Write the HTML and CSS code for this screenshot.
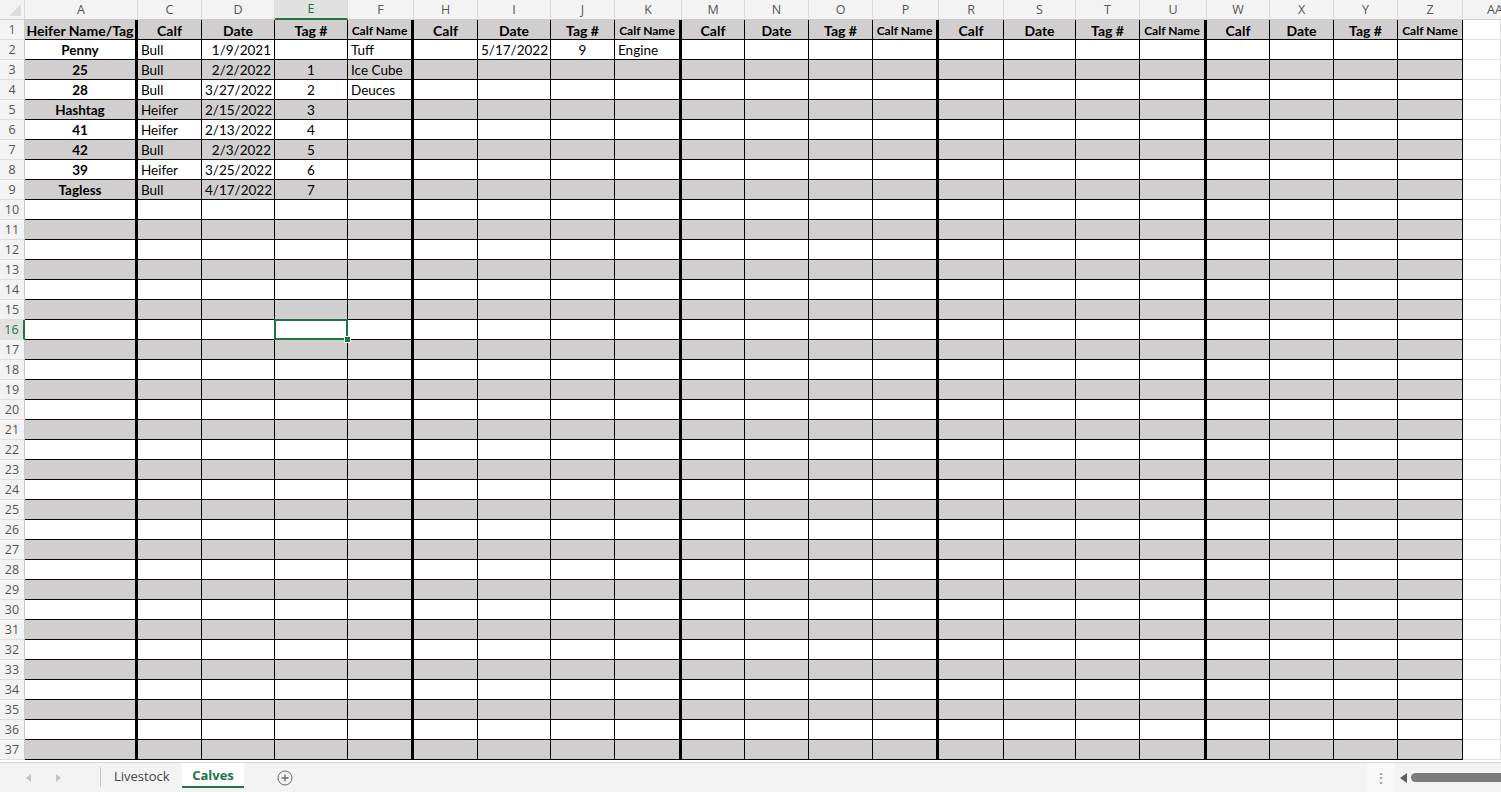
FILE: index.html
```html
<!DOCTYPE html>
<html>
<head>
<meta charset="utf-8">
<title>Calves</title>
<link rel="stylesheet" href="styles.css">
</head>
<body>
<div class="sheet">
  <div class="colhdr"><span class="corner"></span><span>A</span><span>C</span><span>D</span><span class="on">E</span><span>F</span><span>H</span><span>I</span><span>J</span><span>K</span><span>M</span><span>N</span><span>O</span><span>P</span><span>R</span><span>S</span><span>T</span><span>U</span><span>W</span><span>X</span><span>Y</span><span>Z</span><span class="aa">AA</span></div>
  <div class="row h g"><span class="rh">1</span><span>Heifer Name/Tag</span><span>Calf</span><span>Date</span><span>Tag #</span><span class="sm">Calf Name</span><span>Calf</span><span>Date</span><span>Tag #</span><span class="sm">Calf Name</span><span>Calf</span><span>Date</span><span>Tag #</span><span class="sm">Calf Name</span><span>Calf</span><span>Date</span><span>Tag #</span><span class="sm">Calf Name</span><span>Calf</span><span>Date</span><span>Tag #</span><span class="sm">Calf Name</span><span></span></div>
  <div class="row"><span class="rh">2</span><span>Penny</span><span>Bull</span><span>1/9/2021</span><span></span><span>Tuff</span><span></span><span>5/17/2022</span><span>9</span><span>Engine</span><span></span><span></span><span></span><span></span><span></span><span></span><span></span><span></span><span></span><span></span><span></span><span></span><span></span></div>
  <div class="row g"><span class="rh">3</span><span>25</span><span>Bull</span><span>2/2/2022</span><span>1</span><span>Ice Cube</span><span></span><span></span><span></span><span></span><span></span><span></span><span></span><span></span><span></span><span></span><span></span><span></span><span></span><span></span><span></span><span></span><span></span></div>
  <div class="row"><span class="rh">4</span><span>28</span><span>Bull</span><span>3/27/2022</span><span>2</span><span>Deuces</span><span></span><span></span><span></span><span></span><span></span><span></span><span></span><span></span><span></span><span></span><span></span><span></span><span></span><span></span><span></span><span></span><span></span></div>
  <div class="row g"><span class="rh">5</span><span>Hashtag</span><span>Heifer</span><span>2/15/2022</span><span>3</span><span></span><span></span><span></span><span></span><span></span><span></span><span></span><span></span><span></span><span></span><span></span><span></span><span></span><span></span><span></span><span></span><span></span><span></span></div>
  <div class="row"><span class="rh">6</span><span>41</span><span>Heifer</span><span>2/13/2022</span><span>4</span><span></span><span></span><span></span><span></span><span></span><span></span><span></span><span></span><span></span><span></span><span></span><span></span><span></span><span></span><span></span><span></span><span></span><span></span></div>
  <div class="row g"><span class="rh">7</span><span>42</span><span>Bull</span><span>2/3/2022</span><span>5</span><span></span><span></span><span></span><span></span><span></span><span></span><span></span><span></span><span></span><span></span><span></span><span></span><span></span><span></span><span></span><span></span><span></span><span></span></div>
  <div class="row"><span class="rh">8</span><span>39</span><span>Heifer</span><span>3/25/2022</span><span>6</span><span></span><span></span><span></span><span></span><span></span><span></span><span></span><span></span><span></span><span></span><span></span><span></span><span></span><span></span><span></span><span></span><span></span><span></span></div>
  <div class="row g"><span class="rh">9</span><span>Tagless</span><span>Bull</span><span>4/17/2022</span><span>7</span><span></span><span></span><span></span><span></span><span></span><span></span><span></span><span></span><span></span><span></span><span></span><span></span><span></span><span></span><span></span><span></span><span></span><span></span></div>
  <div class="row"><span class="rh">10</span><span></span><span></span><span></span><span></span><span></span><span></span><span></span><span></span><span></span><span></span><span></span><span></span><span></span><span></span><span></span><span></span><span></span><span></span><span></span><span></span><span></span><span></span></div>
  <div class="row g"><span class="rh">11</span><span></span><span></span><span></span><span></span><span></span><span></span><span></span><span></span><span></span><span></span><span></span><span></span><span></span><span></span><span></span><span></span><span></span><span></span><span></span><span></span><span></span><span></span></div>
  <div class="row"><span class="rh">12</span><span></span><span></span><span></span><span></span><span></span><span></span><span></span><span></span><span></span><span></span><span></span><span></span><span></span><span></span><span></span><span></span><span></span><span></span><span></span><span></span><span></span><span></span></div>
  <div class="row g"><span class="rh">13</span><span></span><span></span><span></span><span></span><span></span><span></span><span></span><span></span><span></span><span></span><span></span><span></span><span></span><span></span><span></span><span></span><span></span><span></span><span></span><span></span><span></span><span></span></div>
  <div class="row"><span class="rh">14</span><span></span><span></span><span></span><span></span><span></span><span></span><span></span><span></span><span></span><span></span><span></span><span></span><span></span><span></span><span></span><span></span><span></span><span></span><span></span><span></span><span></span><span></span></div>
  <div class="row g"><span class="rh">15</span><span></span><span></span><span></span><span></span><span></span><span></span><span></span><span></span><span></span><span></span><span></span><span></span><span></span><span></span><span></span><span></span><span></span><span></span><span></span><span></span><span></span><span></span></div>
  <div class="row"><span class="rh on">16</span><span></span><span></span><span></span><span class="sel"></span><span></span><span></span><span></span><span></span><span></span><span></span><span></span><span></span><span></span><span></span><span></span><span></span><span></span><span></span><span></span><span></span><span></span><span></span></div>
  <div class="row g"><span class="rh">17</span><span></span><span></span><span></span><span></span><span></span><span></span><span></span><span></span><span></span><span></span><span></span><span></span><span></span><span></span><span></span><span></span><span></span><span></span><span></span><span></span><span></span><span></span></div>
  <div class="row"><span class="rh">18</span><span></span><span></span><span></span><span></span><span></span><span></span><span></span><span></span><span></span><span></span><span></span><span></span><span></span><span></span><span></span><span></span><span></span><span></span><span></span><span></span><span></span><span></span></div>
  <div class="row g"><span class="rh">19</span><span></span><span></span><span></span><span></span><span></span><span></span><span></span><span></span><span></span><span></span><span></span><span></span><span></span><span></span><span></span><span></span><span></span><span></span><span></span><span></span><span></span><span></span></div>
  <div class="row"><span class="rh">20</span><span></span><span></span><span></span><span></span><span></span><span></span><span></span><span></span><span></span><span></span><span></span><span></span><span></span><span></span><span></span><span></span><span></span><span></span><span></span><span></span><span></span><span></span></div>
  <div class="row g"><span class="rh">21</span><span></span><span></span><span></span><span></span><span></span><span></span><span></span><span></span><span></span><span></span><span></span><span></span><span></span><span></span><span></span><span></span><span></span><span></span><span></span><span></span><span></span><span></span></div>
  <div class="row"><span class="rh">22</span><span></span><span></span><span></span><span></span><span></span><span></span><span></span><span></span><span></span><span></span><span></span><span></span><span></span><span></span><span></span><span></span><span></span><span></span><span></span><span></span><span></span><span></span></div>
  <div class="row g"><span class="rh">23</span><span></span><span></span><span></span><span></span><span></span><span></span><span></span><span></span><span></span><span></span><span></span><span></span><span></span><span></span><span></span><span></span><span></span><span></span><span></span><span></span><span></span><span></span></div>
  <div class="row"><span class="rh">24</span><span></span><span></span><span></span><span></span><span></span><span></span><span></span><span></span><span></span><span></span><span></span><span></span><span></span><span></span><span></span><span></span><span></span><span></span><span></span><span></span><span></span><span></span></div>
  <div class="row g"><span class="rh">25</span><span></span><span></span><span></span><span></span><span></span><span></span><span></span><span></span><span></span><span></span><span></span><span></span><span></span><span></span><span></span><span></span><span></span><span></span><span></span><span></span><span></span><span></span></div>
  <div class="row"><span class="rh">26</span><span></span><span></span><span></span><span></span><span></span><span></span><span></span><span></span><span></span><span></span><span></span><span></span><span></span><span></span><span></span><span></span><span></span><span></span><span></span><span></span><span></span><span></span></div>
  <div class="row g"><span class="rh">27</span><span></span><span></span><span></span><span></span><span></span><span></span><span></span><span></span><span></span><span></span><span></span><span></span><span></span><span></span><span></span><span></span><span></span><span></span><span></span><span></span><span></span><span></span></div>
  <div class="row"><span class="rh">28</span><span></span><span></span><span></span><span></span><span></span><span></span><span></span><span></span><span></span><span></span><span></span><span></span><span></span><span></span><span></span><span></span><span></span><span></span><span></span><span></span><span></span><span></span></div>
  <div class="row g"><span class="rh">29</span><span></span><span></span><span></span><span></span><span></span><span></span><span></span><span></span><span></span><span></span><span></span><span></span><span></span><span></span><span></span><span></span><span></span><span></span><span></span><span></span><span></span><span></span></div>
  <div class="row"><span class="rh">30</span><span></span><span></span><span></span><span></span><span></span><span></span><span></span><span></span><span></span><span></span><span></span><span></span><span></span><span></span><span></span><span></span><span></span><span></span><span></span><span></span><span></span><span></span></div>
  <div class="row g"><span class="rh">31</span><span></span><span></span><span></span><span></span><span></span><span></span><span></span><span></span><span></span><span></span><span></span><span></span><span></span><span></span><span></span><span></span><span></span><span></span><span></span><span></span><span></span><span></span></div>
  <div class="row"><span class="rh">32</span><span></span><span></span><span></span><span></span><span></span><span></span><span></span><span></span><span></span><span></span><span></span><span></span><span></span><span></span><span></span><span></span><span></span><span></span><span></span><span></span><span></span><span></span></div>
  <div class="row g"><span class="rh">33</span><span></span><span></span><span></span><span></span><span></span><span></span><span></span><span></span><span></span><span></span><span></span><span></span><span></span><span></span><span></span><span></span><span></span><span></span><span></span><span></span><span></span><span></span></div>
  <div class="row"><span class="rh">34</span><span></span><span></span><span></span><span></span><span></span><span></span><span></span><span></span><span></span><span></span><span></span><span></span><span></span><span></span><span></span><span></span><span></span><span></span><span></span><span></span><span></span><span></span></div>
  <div class="row g"><span class="rh">35</span><span></span><span></span><span></span><span></span><span></span><span></span><span></span><span></span><span></span><span></span><span></span><span></span><span></span><span></span><span></span><span></span><span></span><span></span><span></span><span></span><span></span><span></span></div>
  <div class="row"><span class="rh">36</span><span></span><span></span><span></span><span></span><span></span><span></span><span></span><span></span><span></span><span></span><span></span><span></span><span></span><span></span><span></span><span></span><span></span><span></span><span></span><span></span><span></span><span></span></div>
  <div class="row g"><span class="rh">37</span><span></span><span></span><span></span><span></span><span></span><span></span><span></span><span></span><span></span><span></span><span></span><span></span><span></span><span></span><span></span><span></span><span></span><span></span><span></span><span></span><span></span><span></span></div>
</div>
<div class="tabbar">
  <div class="nav">
    <svg class="arrow" width="6" height="8" viewBox="0 0 6 8"><path d="M5 0 L0 4 L5 8 Z" fill="#c4c4c4"/></svg>
    <svg class="arrow" width="6" height="8" viewBox="0 0 6 8"><path d="M1 0 L6 4 L1 8 Z" fill="#c4c4c4"/></svg>
  </div>
  <div class="tabs">
    <span class="tab">Livestock</span>
    <span class="tab active">Calves</span>
  </div>
  <span class="add"><svg width="16" height="16" viewBox="0 0 16 16"><circle cx="8" cy="8" r="7" fill="none" stroke="#6b6b6b" stroke-width="1"/><path d="M8 4.5 V11.5 M4.5 8 H11.5" stroke="#6b6b6b" stroke-width="1.3"/></svg></span>
  <div class="right">
    <span class="dots">⋮</span>
    <svg class="larr" width="7" height="10" viewBox="0 0 7 10"><path d="M7 0 L0 5 L7 10 Z" fill="#5f5f5f"/></svg>
    <span class="thumb"></span>
  </div>
</div>
</body>
</html>
```
FILE: styles.css
```css
html, body {
  margin: 0;
  padding: 0;
  background: #ffffff;
}
body {
  width: 1501px;
  height: 792px;
  overflow: hidden;
  font-family: Lato, "Open Sans", sans-serif;
}
.sheet {
  display: flex;
  flex-direction: column;
}
.colhdr, .row {
  display: grid;
  grid-template-columns: 25px 113px 64px 73px 73px 66px 64px 73px 64px 67px 63px 64px 64px 66px 65px 72px 64px 67px 63px 64px 64px 65px 1fr;
  height: 20px;
}
.colhdr {
  background: #f3f3f3;
}
.colhdr span {
  position: relative;
  box-sizing: border-box;
  border-right: 1px solid #dadada;
  border-bottom: 1px solid #cacaca;
  font-family: "Open Sans", sans-serif;
  font-size: 12.5px;
  line-height: 19px;
  color: #555;
  text-align: center;
}
.colhdr span.on {
  background: #e1e1e1;
  color: #217346;
  border-bottom: 2px solid #217346;
  line-height: 18px;
}
.colhdr .aa {
  border-right: none;
  text-align: left;
  padding-left: 24px;
  overflow: hidden;
}
.corner::after {
  content: "";
  position: absolute;
  right: 3px;
  bottom: 3px;
  width: 0;
  height: 0;
  border-left: 12px solid transparent;
  border-bottom: 12px solid #dcdcdc;
}
.row span {
  box-sizing: border-box;
  height: 20px;
  border-right: 1px solid #000;
  border-bottom: 1px solid #000;
  font-size: 13.5px;
  line-height: 19px;
  padding: 1px 3px 0;
  color: #000;
  white-space: nowrap;
  overflow: hidden;
  text-align: left;
}
.row span:nth-child(2),
.row span:nth-child(6),
.row span:nth-child(10),
.row span:nth-child(14),
.row span:nth-child(18) {
  border-right-width: 3px;
}
.row span:nth-child(2) {
  font-weight: 700;
  text-align: center;
}
.row span:nth-child(4),
.row span:nth-child(8) {
  text-align: right;
  padding-right: 3px;
}
.row span:nth-child(5),
.row span:nth-child(9) {
  text-align: center;
}
.row span:last-child {
  border-right: 1px solid #e1e1e1;
  border-bottom: 1px solid #e1e1e1;
  background: #fff;
}
.row.g span {
  background: #d0cece;
}
.row.g span:last-child {
  background: #fff;
}
.row.h span {
  font-weight: 700;
  font-size: 14px;
  text-align: center;
  padding: 1px 1px 0;
}
.row.h span.sm {
  font-size: 12px;
}
.row span.rh,
.row.g span.rh {
  background: #f3f3f3;
  border-right: 1px solid #cacaca;
  border-bottom: 1px solid #dedede;
  font-family: "Open Sans", sans-serif;
  font-weight: 400;
  font-size: 12.5px;
  color: #555;
  text-align: center;
  padding: 0;
}
.row span.rh.on {
  background: #e1e1e1;
  color: #217346;
  border-right: 2px solid #217346;
}
.row span.sel {
  position: relative;
  overflow: visible;
}
.sel::after {
  content: "";
  position: absolute;
  left: -1px;
  top: -1px;
  right: -1px;
  bottom: -1px;
  border: 2px solid #217346;
}
.sel::before {
  content: "";
  position: absolute;
  right: -4px;
  bottom: -4px;
  width: 5px;
  height: 5px;
  background: #217346;
  border: 1px solid #fff;
  z-index: 2;
}
.tabbar {
  margin-top: 2px;
  height: 30px;
  box-sizing: border-box;
  border-top: 1px solid #d8d8d8;
  background: #f3f3f3;
  display: flex;
  align-items: flex-start;
  font-family: "Open Sans", sans-serif;
}
.nav {
  width: 100px;
  height: 29px;
  display: flex;
  align-items: center;
  gap: 23px;
  padding-left: 26px;
  box-sizing: border-box;
}
.tabs {
  display: flex;
  border-left: 1px solid #c6c6c6;
  margin-top: 4px;
  height: 20px;
  align-items: stretch;
}
.tab {
  font-size: 13px;
  color: #444;
  line-height: 26px;
  height: 25px;
  margin-top: -4px;
  padding: 0 13px;
  width: 80px;
  box-sizing: border-box;
  text-align: center;
}
.tab.active {
  width: 62px;
  padding: 0;
  margin-left: 1px;
  background: #fff;
  color: #217346;
  font-weight: 700;
  border-bottom: 2px solid #217346;
  height: 25px;
  line-height: 25px;
}
.add {
  margin-left: 33px;
  height: 29px;
  display: flex;
  align-items: center;
}
.right {
  margin-left: auto;
  width: 134px;
  height: 29px;
  display: flex;
  align-items: center;
}
.dots {
  width: 28px;
  height: 29px;
  background: #f8f8f8;
  color: #8a8a8a;
  font-size: 14px;
  line-height: 29px;
  text-align: center;
}
.larr {
  margin-left: 5px;
}
.thumb {
  flex: 1;
  height: 9px;
  margin-left: 4px;
  background: #7b7b7b;
  border-radius: 5px 0 0 5px;
}
```
